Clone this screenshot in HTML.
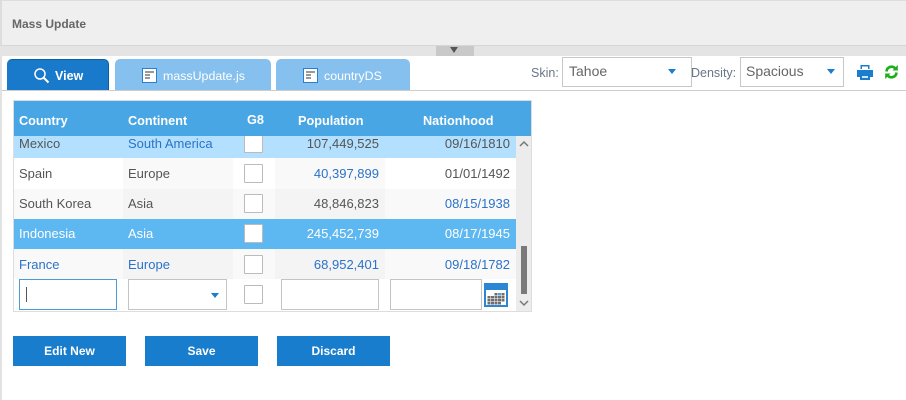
<!DOCTYPE html>
<html>
<head>
<meta charset="utf-8">
<style>
html,body{margin:0;padding:0;width:906px;height:400px;overflow:hidden;background:#fff;font-family:"Liberation Sans",sans-serif;}
.a{position:absolute;box-sizing:border-box;}
.t{position:absolute;white-space:nowrap;font-size:13px;line-height:16px;color:#555;}
.r{text-align:right;}
.b{color:#2b72c9;}
.w{color:#fff;}
.h{font-weight:bold;color:#fff;font-size:12.7px;}
.cb{position:absolute;box-sizing:border-box;left:244px;width:19px;height:19px;border:1.5px solid #bbb;background:#fff;border-radius:1px;}
.inp{position:absolute;box-sizing:border-box;background:#fff;border:1px solid #c4c4c4;height:31px;top:279px;}
.tab{position:absolute;box-sizing:border-box;top:59px;height:31px;background:#85c0ee;border-radius:5px 5px 0 0;}
.btn{position:absolute;box-sizing:border-box;top:336px;width:113px;height:30px;background:#197dcd;color:#fff;font-size:12px;font-weight:bold;text-align:center;line-height:30px;}
.sel{position:absolute;box-sizing:border-box;top:57px;height:30px;background:#fff;border:1px solid #c8c8c8;}
.arr{position:absolute;width:0;height:0;border-left:5px solid transparent;border-right:5px solid transparent;border-top:5px solid #1a7dcd;}
</style>
</head>
<body>
<!-- header -->
<div class="a" style="left:0;top:0;width:906px;height:46px;background:#efefef;border-top:1px solid #ddd;border-bottom:1px solid #d6d6d6;border-left:2px solid #ddd;"></div>
<div class="t" style="left:12px;top:16px;font-weight:bold;font-size:12px;color:#666;">Mass Update</div>
<div class="a" style="left:0;top:46px;width:906px;height:10px;background:#e4e4e4;"></div>
<div class="a" style="left:436px;top:46px;width:38px;height:10px;background:#c9c9c9;"></div>
<div class="a" style="left:450px;top:47px;width:0;height:0;border-left:4px solid transparent;border-right:4px solid transparent;border-top:6px solid #555;"></div>
<div class="a" style="left:0;top:56px;width:2px;height:344px;background:#e2e2e2;"></div>

<!-- tabs -->
<div class="a" style="left:2px;top:90px;width:904px;height:1px;background:#ccc;"></div>
<div class="tab" style="left:7px;width:102px;background:#197acb;border-top:1px solid #0f5f9f;border-right:1px solid #0f5f9f;"></div>
<svg class="a" style="left:33px;top:67px;" width="18" height="17" viewBox="0 0 18 17"><circle cx="7" cy="7" r="5" fill="none" stroke="#fff" stroke-width="1.5"/><path d="M10.5 10.5L15.5 15.5" stroke="#fff" stroke-width="2"/></svg>
<div class="t w" style="left:55px;top:68px;font-weight:bold;font-size:12.5px;">View</div>
<div class="tab" style="left:115px;width:156px;"></div>
<div class="t w" style="left:163px;top:68px;font-size:12.4px;">massUpdate.js</div>
<div class="tab" style="left:276px;width:134px;"></div>
<div class="t w" style="left:324px;top:68px;font-size:12.4px;">countryDS</div>
<svg class="a" style="left:142px;top:68px;" width="15" height="15"><rect x=".5" y=".5" width="14" height="14" fill="#fff" stroke="#2b7fd0"/><path d="M3 4h9M3 7h5M3 10h5" stroke="#999" stroke-width="2"/></svg>
<svg class="a" style="left:303px;top:68px;" width="15" height="15"><rect x=".5" y=".5" width="14" height="14" fill="#fff" stroke="#2b7fd0"/><path d="M3 4h9M3 7h5M3 10h5" stroke="#999" stroke-width="2"/></svg>

<!-- skin/density -->
<div class="t" style="left:531px;top:65px;font-size:12.5px;color:#6b7488;">Skin:</div>
<div class="sel" style="left:562px;width:130px;"></div>
<div class="t" style="left:569px;top:63px;font-size:14px;color:#666;">Tahoe</div>
<div class="arr" style="left:668px;top:69px;border-left-width:4.5px;border-right-width:4.5px;"></div>
<div class="t" style="left:691px;top:65px;font-size:12.5px;color:#6b7488;">Density:</div>
<div class="sel" style="left:740px;width:104px;"></div>
<div class="t" style="left:746px;top:63px;font-size:14px;color:#666;">Spacious</div>
<div class="arr" style="left:827px;top:69px;border-left-width:4.5px;border-right-width:4.5px;"></div>
<svg class="a" style="left:857px;top:65px;" width="16" height="15" viewBox="0 0 16 15"><path d="M3.500 0h9v4h-9z" fill="#1a7dcd"/><path d="M5 1.500h6V4H5z" fill="#fff"/><path d="M0 5h16v7h-3V9H3v3H0z" fill="#1a7dcd"/><path d="M3 9h10v6H3z" fill="#1a7dcd"/><path d="M5 11h6v2H5z" fill="#cfe6f8"/></svg>
<svg class="a" style="left:885px;top:65px;" width="13" height="14" viewBox="0 0 13 14"><path d="M1.500 6.500A5 5 0 0 1 10 3.200" fill="none" stroke="#18b018" stroke-width="2.600"/><path d="M7.500 5.500h5.300V0z" fill="#18b018"/><path d="M11.500 7.500A5 5 0 0 1 3 10.800" fill="none" stroke="#18b018" stroke-width="2.600"/><path d="M5.500 8.500H.2V14z" fill="#18b018"/></svg>

<!-- grid -->
<div class="a" style="left:13px;top:100px;width:519px;height:212px;border:1px solid #ddd;background:#fff;"></div>
<div class="a" style="left:14px;top:101px;width:502px;height:210px;background:#fff;"></div>
<div class="a" style="left:516px;top:136px;width:15px;height:175px;background:#ececec;"></div>
<div class="a" style="left:521px;top:246px;width:6px;height:48px;background:#7a7a7a;"></div>
<svg class="a" style="left:519px;top:140px;" width="10" height="8"><path d="M1 6l4-4 4 4" fill="none" stroke="#777" stroke-width="1.500"/></svg>
<svg class="a" style="left:519px;top:299px;" width="10" height="8"><path d="M1 2l4 4 4-4" fill="none" stroke="#777" stroke-width="1.500"/></svg>

<!-- rows -->
<div class="a" style="left:14px;top:136px;width:502px;height:22px;background:#b3e0ff;"></div>
<div class="a" style="left:123px;top:158px;width:110px;height:31px;background:#f9f9f9;"></div>
<div class="a" style="left:275px;top:158px;width:110px;height:31px;background:#f9f9f9;"></div>
<div class="a" style="left:14px;top:189px;width:502px;height:30px;background:#f9f9f9;"></div>
<div class="a" style="left:123px;top:189px;width:110px;height:30px;background:#f4f4f4;"></div>
<div class="a" style="left:275px;top:189px;width:110px;height:30px;background:#f4f4f4;"></div>
<div class="a" style="left:14px;top:219px;width:502px;height:30px;background:#5db7f1;"></div>
<div class="a" style="left:14px;top:249px;width:502px;height:30px;background:#f9f9f9;"></div>
<div class="a" style="left:123px;top:249px;width:110px;height:30px;background:#f4f4f4;"></div>
<div class="a" style="left:275px;top:249px;width:110px;height:30px;background:#f4f4f4;"></div>

<!-- cells -->
<div class="t" style="left:19px;top:136px;">Mexico</div>
<div class="t b" style="left:128px;top:136px;">South America</div>
<div class="t r" style="left:275px;width:104px;top:136px;">107,449,525</div>
<div class="t r" style="left:400px;width:110px;top:136px;">09/16/1810</div>
<div class="cb" style="top:134px;"></div>

<div class="t" style="left:19px;top:166px;">Spain</div>
<div class="t" style="left:128px;top:166px;">Europe</div>
<div class="t r b" style="left:275px;width:104px;top:166px;">40,397,899</div>
<div class="t r" style="left:400px;width:110px;top:166px;">01/01/1492</div>
<div class="cb" style="top:164px;"></div>

<div class="t" style="left:19px;top:196px;">South Korea</div>
<div class="t" style="left:128px;top:196px;">Asia</div>
<div class="t r" style="left:275px;width:104px;top:196px;">48,846,823</div>
<div class="t r b" style="left:400px;width:110px;top:196px;">08/15/1938</div>
<div class="cb" style="top:194px;"></div>

<div class="t w" style="left:19px;top:226px;">Indonesia</div>
<div class="t w" style="left:128px;top:226px;">Asia</div>
<div class="t r w" style="left:275px;width:104px;top:226px;">245,452,739</div>
<div class="t r w" style="left:400px;width:110px;top:226px;">08/17/1945</div>
<div class="cb" style="top:224px;"></div>

<div class="t b" style="left:19px;top:257px;">France</div>
<div class="t b" style="left:128px;top:257px;">Europe</div>
<div class="t r b" style="left:275px;width:104px;top:257px;">68,952,401</div>
<div class="t r b" style="left:400px;width:110px;top:257px;">09/18/1782</div>
<div class="cb" style="top:255px;"></div>

<!-- header row (painted over the partly scrolled first row) -->
<div class="a" style="left:14px;top:101px;width:517px;height:35px;background:#47a6e3;"></div>
<div class="t h" style="left:19px;top:113px;">Country</div>
<div class="t h" style="left:128px;top:113px;">Continent</div>
<div class="t h" style="left:247px;top:112px;">G8</div>
<div class="t h" style="left:298px;top:113px;">Population</div>
<div class="t h" style="left:423px;top:113px;">Nationhood</div>

<!-- edit row -->
<div class="inp" style="left:19px;width:98px;border-color:#4a9bd8;"></div>
<div class="a" style="left:26px;top:287px;width:1px;height:15px;background:#555;"></div>
<div class="inp" style="left:128px;width:99px;"></div>
<div class="arr" style="left:211px;top:293px;border-left-width:4.500px;border-right-width:4.500px;"></div>
<div class="cb" style="top:285px;"></div>
<div class="inp" style="left:281px;width:98px;"></div>
<div class="inp" style="left:390px;width:92px;"></div>
<svg class="a" style="left:484px;top:283px;" width="24" height="24" viewBox="0 0 24 24">
<rect width="24" height="24" fill="#2c86d3"/>
<rect x="2" y="7" width="20" height="15" fill="#fff"/>
<g fill="#6f6f6f"><rect x="3.500" y="13" width="3" height="2.500"/><rect x="7" y="13" width="3" height="2.500"/><rect x="10.500" y="13" width="3" height="2.500"/><rect x="14" y="13" width="3" height="2.500"/><rect x="17.500" y="13" width="3" height="2.500"/>
<rect x="3.500" y="16" width="3" height="2.500"/><rect x="7" y="16" width="3" height="2.500"/><rect x="10.500" y="16" width="3" height="2.500"/><rect x="14" y="16" width="3" height="2.500"/><rect x="17.500" y="16" width="3" height="2.500"/>
<rect x="3.500" y="19" width="3" height="2.500"/><rect x="7" y="19" width="3" height="2.500"/><rect x="10.500" y="19" width="3" height="2.500"/><rect x="14" y="19" width="3" height="2.500"/></g>
<rect x="10.500" y="10" width="3" height="2.500" fill="#6f6f6f"/><rect x="14" y="10" width="3" height="2.500" fill="#5b9bd5"/><rect x="17.500" y="10" width="3" height="2.500" fill="#6f6f6f"/>
</svg>

<!-- buttons -->
<div class="btn" style="left:13px;">Edit New</div>
<div class="btn" style="left:145px;">Save</div>
<div class="btn" style="left:277px;">Discard</div>
</body>
</html>
